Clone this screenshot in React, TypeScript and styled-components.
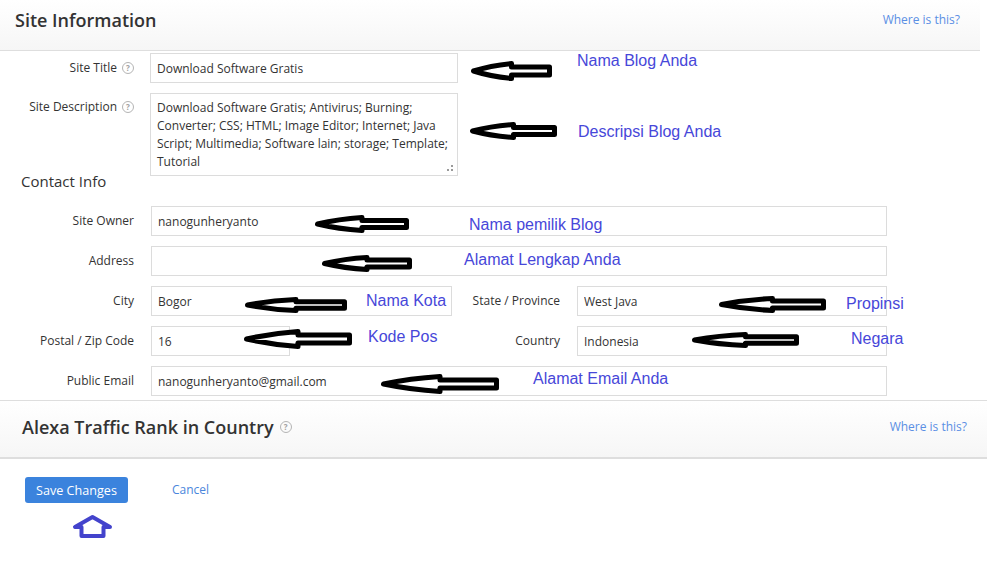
import * as React from 'react'
import styled, { createGlobalStyle } from 'styled-components'

const GlobalStyle = createGlobalStyle`
  html, body {
    margin: 0;
    padding: 0;
    background: #fff;
  }
  body {
    font-family: 'Open Sans', 'Liberation Sans', sans-serif;
    color: #333;
  }
`

const SPage = styled.div`
  position: relative;
  width: 1000px;
  height: 562px;
  overflow: hidden;
  background: #fff;
`

interface ISectionHeader {
  $width: number
  $padLeft: number
  $height: number
  $lift: number
  $top?: boolean
}

const SSectionHeader = styled.div<ISectionHeader>`
  box-sizing: border-box;
  width: ${({ $width }) => $width}px;
  height: ${({ $height }) => $height}px;
  display: flex;
  align-items: center;
  justify-content: space-between;
  padding: 0 20px ${({ $lift }) => $lift}px ${({ $padLeft }) => $padLeft}px;
  background: linear-gradient(#ffffff, #f6f6f6);
  border-top: ${({ $top }) => ($top ? '1px solid #dedede' : 'none')};
  border-bottom: ${({ $top }) => ($top ? '2px' : '1px')} solid #dedede;
`

const STitle = styled.h2`
  margin: 0;
  display: flex;
  align-items: center;
  font-size: 18px;
  line-height: 24px;
  font-weight: 600;
  color: #333;
`

const SWhere = styled.a`
  font-size: 12px;
  line-height: 16px;
  color: #5a8fe4;
  text-decoration: none;
  cursor: pointer;
`

const SForm = styled.div<{ $padTop: number }>`
  display: flex;
  flex-direction: column;
  gap: 10px;
  padding-top: ${({ $padTop }) => $padTop}px;
`

const SRow = styled.div<{ $top?: boolean }>`
  display: flex;
  align-items: ${({ $top }) => ($top ? 'flex-start' : 'center')};
`

interface ILabel {
  $width: number
  $gap: number
  $padTop?: number
}

const SLabel = styled.label<ILabel>`
  box-sizing: border-box;
  width: ${({ $width }) => $width}px;
  flex-shrink: 0;
  margin-right: ${({ $gap }) => $gap}px;
  padding-top: ${({ $padTop }) => $padTop || 0}px;
  display: flex;
  align-items: center;
  justify-content: flex-end;
  font-size: 12px;
  line-height: 18px;
  color: #333;
  white-space: nowrap;
`

const SHelp = styled.span<{ $big?: boolean }>`
  box-sizing: border-box;
  width: 12px;
  height: 12px;
  margin-left: ${({ $big }) => ($big ? 6 : 5)}px;
  border: 1px solid #b4b4b4;
  border-radius: 50%;
  display: inline-flex;
  align-items: center;
  justify-content: center;
  font-size: 8px;
  line-height: 1;
  font-weight: 700;
  color: #a0a0a0;
`

const SInput = styled.input<{ $width: number }>`
  box-sizing: border-box;
  width: ${({ $width }) => $width}px;
  height: 30px;
  margin: 0;
  padding: 0 6px;
  border: 1px solid #dcdcdc;
  border-radius: 0;
  background: #fff;
  font-family: 'Open Sans', 'Liberation Sans', sans-serif;
  font-size: 12px;
  color: #333;
  outline: none;
`

const SAreaWrap = styled.div`
  position: relative;
  width: 308px;
  height: 83px;
`

const STextArea = styled.textarea`
  box-sizing: border-box;
  width: 308px;
  height: 83px;
  margin: 0;
  padding: 5px 3px 3px 6px;
  border: 1px solid #dcdcdc;
  border-radius: 0;
  resize: none;
  overflow: hidden;
  font-family: 'Open Sans', 'Liberation Sans', sans-serif;
  font-size: 12px;
  line-height: 18px;
  color: #333;
  outline: none;
`

const SGrip = styled.span`
  position: absolute;
  right: 5px;
  bottom: 5px;
  width: 8px;
  height: 6px;
  background:
    radial-gradient(circle, #9a9a9a 0.9px, transparent 1.1px) 6px 0 / 2px 2px no-repeat,
    radial-gradient(circle, #9a9a9a 0.9px, transparent 1.1px) 2px 4px / 2px 2px no-repeat,
    radial-gradient(circle, #9a9a9a 0.9px, transparent 1.1px) 6px 4px / 2px 2px no-repeat;
`

const SSlot = styled.div`
  width: 301px;
  flex-shrink: 0;
`

const SContactHeading = styled.h3`
  margin: 0 0 19px;
  padding-left: 21px;
  font-size: 15px;
  line-height: 11px;
  font-weight: 400;
  color: #333;
`

const SFooter = styled.div`
  display: flex;
  align-items: center;
  padding: 18px 0 0 25px;
`

const SSaveButton = styled.button`
  box-sizing: border-box;
  width: 103px;
  height: 26px;
  padding: 0;
  border: none;
  border-radius: 3px;
  background: #3b83dd;
  color: #fff;
  font-family: 'Open Sans', 'Liberation Sans', sans-serif;
  font-size: 12.6px;
  cursor: pointer;
`

const SCancel = styled.a`
  margin: -2px 0 0 44px;
  font-size: 12px;
  color: #4a86dc;
  cursor: pointer;
`

const SNote = styled.div<{ $x: number; $y: number }>`
  position: absolute;
  left: ${({ $x }) => $x}px;
  top: ${({ $y }) => $y}px;
  font-family: 'Liberation Sans', Arial, sans-serif;
  font-size: 16px;
  line-height: 18px;
  color: #4747d9;
  white-space: nowrap;
`

const SMark = styled.svg<{ $x: number; $y: number }>`
  position: absolute;
  left: ${({ $x }) => $x}px;
  top: ${({ $y }) => $y}px;
  overflow: visible;
`

// hand drawn "left" arrows pointing at the fields
const arrows: [number, number, number, number][] = [
  [471, 61, 81, 20],
  [470, 122, 87, 18],
  [315, 215, 94, 18],
  [322, 255, 90, 17],
  [245, 297, 102, 16],
  [719, 296, 107, 17],
  [244, 329, 108, 20],
  [692, 332, 107, 16],
  [381, 374, 118, 20]
]

const notes: [string, number, number][] = [
  ['Nama Blog Anda', 577, 52],
  ['Descripsi Blog Anda', 578, 123],
  ['Nama pemilik Blog', 469, 216],
  ['Alamat Lengkap Anda', 464, 251],
  ['Nama Kota', 366, 292],
  ['Propinsi', 846, 295],
  ['Kode Pos', 368, 328],
  ['Negara', 851, 330],
  ['Alamat Email Anda', 533, 370]
]

const HandArrow = ({ x, y, w, h }: { x: number; y: number; w: number; h: number }) => {
  const hx = w * 0.5
  const s1 = h * 0.3
  const s2 = h * 0.7
  const m = h / 2
  const d = `M2.5 ${m} Q${hx * 0.5} ${h * 0.22} ${hx} 2.5 L${hx} ${s1} L${w - 2.5} ${s1} L${w - 2.5} ${s2} L${hx} ${s2} L${hx} ${h - 2.5} Q${hx * 0.5} ${h * 0.78} 2.5 ${m} Z`
  return (
    <SMark $x={x} $y={y} width={w} height={h} viewBox={`0 0 ${w} ${h}`}>
      <path d={d} fill="#fff" stroke="#000" strokeWidth={5} strokeLinejoin="round" />
    </SMark>
  )
}

const UpArrow = () => (
  <SMark $x={73} $y={515} width={39} height={23} viewBox="0 0 39 23">
    <path
      d="M19.5 2 L2 12 L8.5 12 L8.5 21 L30.5 21 L30.5 12 L37 12 Z"
      fill="#fff"
      stroke="#4343cc"
      strokeWidth={4}
      strokeLinejoin="round"
    />
  </SMark>
)

const App = () => {
  return (
    <SPage>
      <GlobalStyle />
      <SSectionHeader $width={980} $height={51} $padLeft={15} $lift={11}>
        <STitle>{'Site Information'}</STitle>
        <SWhere>{'Where is this?'}</SWhere>
      </SSectionHeader>

      <SForm $padTop={2}>
        <SRow>
          <SLabel $width={134} $gap={16}>
            {'Site Title'}
            <SHelp>{'?'}</SHelp>
          </SLabel>
          <SInput $width={308} defaultValue="Download Software Gratis" />
        </SRow>
        <SRow $top>
          <SLabel $width={134} $gap={16} $padTop={5}>
            {'Site Description'}
            <SHelp>{'?'}</SHelp>
          </SLabel>
          <SAreaWrap>
            <STextArea defaultValue="Download Software Gratis; Antivirus; Burning; Converter; CSS; HTML; Image Editor; Internet; Java Script; Multimedia; Software lain; storage; Template; Tutorial" />
            <SGrip />
          </SAreaWrap>
        </SRow>
      </SForm>

      <SContactHeading>{'Contact Info'}</SContactHeading>

      <SForm $padTop={0}>
        <SRow>
          <SLabel $width={134} $gap={17}>{'Site Owner'}</SLabel>
          <SInput $width={736} defaultValue="nanogunheryanto" />
        </SRow>
        <SRow>
          <SLabel $width={134} $gap={17}>{'Address'}</SLabel>
          <SInput $width={736} defaultValue="" />
        </SRow>
        <SRow>
          <SLabel $width={134} $gap={17}>{'City'}</SLabel>
          <SSlot>
            <SInput $width={301} defaultValue="Bogor" />
          </SSlot>
          <SLabel $width={108} $gap={17}>{'State / Province'}</SLabel>
          <SInput $width={310} defaultValue="West Java" />
        </SRow>
        <SRow>
          <SLabel $width={134} $gap={17}>{'Postal / Zip Code'}</SLabel>
          <SSlot>
            <SInput $width={139} defaultValue="16" />
          </SSlot>
          <SLabel $width={108} $gap={17}>{'Country'}</SLabel>
          <SInput $width={310} defaultValue="Indonesia" />
        </SRow>
        <SRow>
          <SLabel $width={134} $gap={17}>{'Public Email'}</SLabel>
          <SInput $width={736} defaultValue="nanogunheryanto@gmail.com" />
        </SRow>
      </SForm>

      <div style={{ height: 4 }} />
      <SSectionHeader $width={987} $height={59} $padLeft={22} $lift={4} $top>
        <STitle>
          {'Alexa Traffic Rank in Country'}
          <SHelp $big>{'?'}</SHelp>
        </STitle>
        <SWhere>{'Where is this?'}</SWhere>
      </SSectionHeader>

      <SFooter>
        <SSaveButton>{'Save Changes'}</SSaveButton>
        <SCancel>{'Cancel'}</SCancel>
      </SFooter>

      {arrows.map(([x, y, w, h]) => (
        <HandArrow key={`${x}-${y}`} x={x} y={y} w={w} h={h} />
      ))}
      {notes.map(([text, x, y]) => (
        <SNote key={text} $x={x} $y={y}>
          {text}
        </SNote>
      ))}
      <UpArrow />
    </SPage>
  )
}

export default App
